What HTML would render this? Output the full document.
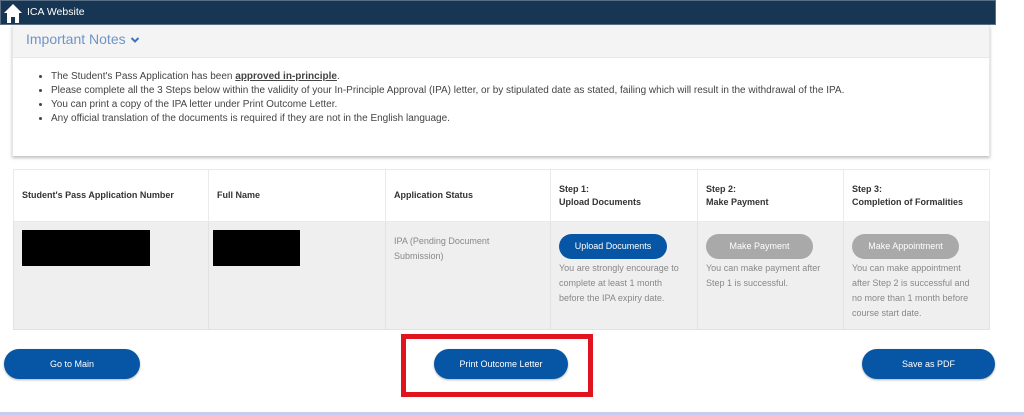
<!DOCTYPE html>
<html><head><meta charset="utf-8"><style>
*{margin:0;padding:0;box-sizing:border-box}
body{width:1024px;height:415px;background:#fff;font-family:"Liberation Sans",sans-serif;position:relative;overflow:hidden;color:#333}
.a{position:absolute}
.top{left:0;top:0;width:996px;height:25px;background:#163653;border:1px solid #5a6f85}
.panel{left:12px;top:25px;width:978px;height:131px;background:#fff;box-shadow:0 2px 3px rgba(0,0,0,.25);border-left:1px solid #e6e6e6;border-right:1px solid #e6e6e6}
.ph{left:0;top:0;width:100%;height:33px;background:#f4f4f4;border-bottom:1px solid #e8e8e8}
ul{position:absolute;left:38px;top:45px;font-size:10px;line-height:14px;color:#444}
table{position:absolute;left:13px;top:169px;width:977px;border-collapse:collapse;font-size:9px}
td{border:1px solid #e2e2e2;vertical-align:top;padding:0 8px}
th{border:1px solid #eaeaea;text-align:left;font-weight:bold;height:52px;padding:0 8px;color:#333;font-size:9px;line-height:13px;background:#fff}
tr.b td{background:#efefef;height:108px;padding-top:12px;color:#888;line-height:15px}
.btn{display:block;height:25px;border-radius:13px;color:#fff;font-size:9px;text-align:center;line-height:25px;margin-bottom:2px}
.blue{background:#0756a6}.grey{background:#a9a9a9}
.bb{position:absolute;height:30px;border-radius:15px;background:#0756a6;color:#fff;font-size:9px;text-align:center;line-height:30px;box-shadow:0 1px 2px rgba(0,0,0,.3)}
</style></head><body>
<div class="a top">
<svg class="a" style="left:2px;top:2px" width="20" height="21" viewBox="0 0 20 21"><path d="M10 1 L19 10 L16 10 L16 20 L12 20 L12 14 L8 14 L8 20 L4 20 L4 10 L1 10 Z" fill="#fff"/></svg>
<span class="a" style="left:26px;top:5px;color:#fff;font-size:10.5px">ICA Website</span>
</div>
<div class="a panel">
<div class="a ph"><span class="a" style="left:13px;top:6px;font-size:14px;color:#6d94c9">Important Notes</span>
<svg class="a" style="left:117px;top:11px" width="10" height="8" viewBox="0 0 10 8"><path d="M1.5 2 L5 5.5 L8.5 2" fill="none" stroke="#3a73c0" stroke-width="2"/></svg></div>
<ul>
<li>The Student's Pass Application has been <b style="text-decoration:underline">approved in-principle</b>.</li>
<li>Please complete all the 3 Steps below within the validity of your In-Principle Approval (IPA) letter, or by stipulated date as stated, failing which will result in the withdrawal of the IPA.</li>
<li>You can print a copy of the IPA letter under Print Outcome Letter.</li>
<li>Any official translation of the documents is required if they are not in the English language.</li>
</ul>
</div>
<table>
<tr><th style="width:195px">Student's Pass Application Number</th><th style="width:177px">Full Name</th><th style="width:165px">Application Status</th><th style="width:147px">Step 1:<br>Upload Documents</th><th style="width:146px">Step 2:<br>Make Payment</th><th>Step 3:<br>Completion of Formalities</th></tr>
<tr class="b"><td><div style="width:128px;height:36px;background:#000;margin-top:-4px"></div></td><td style="padding-left:4px"><div style="width:87px;height:36px;background:#000;margin-top:-4px"></div></td><td style="padding-right:40px">IPA (Pending Document Submission)</td>
<td><span class="btn blue" style="width:108px">Upload Documents</span>You are strongly encourage to complete at least 1 month before the IPA expiry date.</td>
<td><span class="btn grey" style="width:107px">Make Payment</span>You can make payment after Step 1 is successful.</td>
<td><span class="btn grey" style="width:107px">Make Appointment</span>You can make appointment after Step 2 is successful and no more than 1 month before course start date.</td></tr>
</table>
<div class="bb" style="left:4px;top:349px;width:136px">Go to Main</div>
<div class="bb" style="left:434px;top:349px;width:134px">Print Outcome Letter</div>
<div class="bb" style="left:862px;top:349px;width:133px">Save as PDF</div>
<div class="a" style="left:401px;top:334px;width:192px;height:63px;border:5px solid #e0141e"></div>
<div class="a" style="left:0;top:412px;width:1024px;height:3px;background:#c8cdf0"></div>
</body></html>
